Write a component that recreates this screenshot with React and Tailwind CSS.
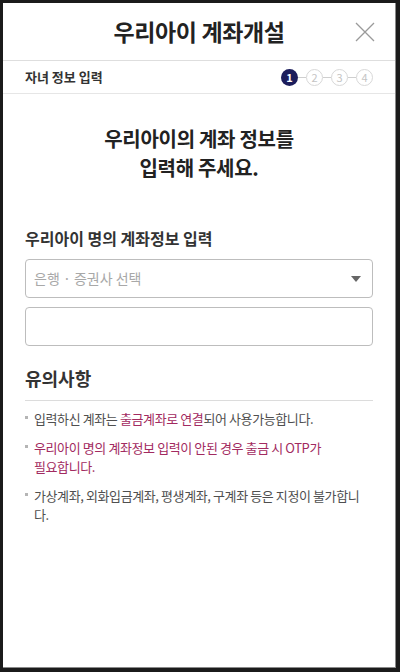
import React from 'react'

const font = { fontFamily: '"Noto Sans CJK KR", "Noto Sans", sans-serif' }

function Steps() {
  return (
    <div className="flex items-center">
      <span className="flex h-[17px] w-[17px] items-center justify-center rounded-full bg-[#1c1d5c] text-[11px] font-bold leading-none text-white">1</span>
      {[2, 3, 4].map((n) => (
        <React.Fragment key={n}>
          <span className="h-px w-[8px] bg-[#cfcfcf]" />
          <span className="flex h-[17px] w-[17px] items-center justify-center rounded-full border border-[#d8d8d8] text-[11px] leading-none text-[#c4c4c4]">{n}</span>
        </React.Fragment>
      ))}
    </div>
  )
}

function Note({ children }) {
  return (
    <li className="flex gap-[6px]">
      <span className="mt-[7px] h-[3px] w-[3px] shrink-0 bg-[#b5b5b5]" />
      <p>{children}</p>
    </li>
  )
}

export default function App() {
  return (
    <div className="h-[672px] w-[400px] bg-[#1b1b1b] pb-[4px] pl-[3px] pr-[4px] pt-[3px]" style={font}>
      <div className="flex h-full flex-col border-b border-r border-[#8a8a8a] bg-white">
        <header className="relative flex h-[58px] items-center justify-center border-b border-[#dedede]">
          <h1 className="text-[23px] font-bold tracking-[-0.4px] text-[#222]">우리아이 계좌개설</h1>
          <button className="absolute right-[20px] top-[19px] h-[20px] w-[20px]">
            <svg viewBox="0 0 20 20" className="h-full w-full" fill="none" stroke="#9a9a9a" strokeWidth="1.3">
              <path d="M1 1L19 19M19 1L1 19" />
            </svg>
          </button>
        </header>
        <div className="flex h-[33px] items-center justify-between border-b border-[#e6e6e6] pl-[22px] pr-[22px]">
          <span className="text-[13px] font-bold text-[#333]">자녀 정보 입력</span>
          <Steps />
        </div>
        <div className="px-[22px]">
          <h2 className="mt-[30px] text-center text-[20px] font-bold leading-[29px] tracking-[-0.3px] text-[#222]">
            우리아이의 계좌 정보를<br />입력해 주세요.
          </h2>
          <h3 className="mt-[44px] text-[16px] font-bold text-[#333]">우리아이 명의 계좌정보 입력</h3>
          <button className="mt-[9px] flex h-[39px] w-full items-center justify-between rounded-[4px] border border-[#bdbdbd] pl-[8px] pr-[11px]">
            <span className="text-[14px] text-[#a8a8a8]">은행 · 증권사 선택</span>
            <svg viewBox="0 0 10 6" className="h-[6px] w-[10px]"><path d="M0 0H10L5 6Z" fill="#666" /></svg>
          </button>
          <input className="mt-[9px] block h-[39px] w-full rounded-[4px] border border-[#bdbdbd] px-[8px] outline-none" />
          <h3 className="mt-[19px] text-[18px] font-bold text-[#333]">유의사항</h3>
          <div className="mt-[8px] h-px bg-[#dcdcdc]" />
          <ul className="mt-[8px] flex flex-col gap-[10px] text-[13px] leading-[19px] tracking-[-0.4px] text-[#4f4f4f]">
            <Note>입력하신 계좌는 <span className="text-[#a22a60]">출금계좌로 연결</span>되어 사용가능합니다.</Note>
            <Note><span className="text-[#a22a60]">우리아이 명의 계좌정보 입력이 안된 경우 출금 시 OTP가<br />필요합니다.</span></Note>
            <Note>가상계좌, 외화입금계좌, 평생계좌, 구계좌 등은 지정이 불가합니<br />다.</Note>
          </ul>
        </div>
      </div>
    </div>
  )
}
